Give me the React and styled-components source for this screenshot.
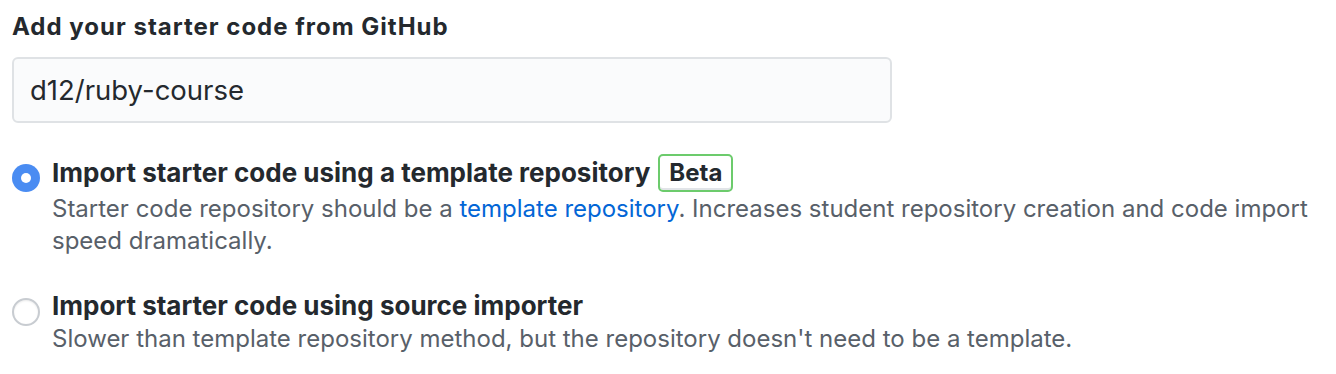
import React from "react";
import styled, { createGlobalStyle } from "styled-components";

const GlobalStyle = createGlobalStyle`
  body {
    margin: 0;
    background: #ffffff;
    font-family: Inter, "Liberation Sans", Arial, sans-serif;
    color: #24292e;
  }
`;

const Page = styled.div`
  padding: 12px 0 0 12px;
  width: 1324px;
`;

const Heading = styled.h3`
  margin: 0;
  font-size: 24px;
  line-height: 30px;
  font-weight: 700;
  letter-spacing: 1px;
  color: #24292e;
`;

const RepoInput = styled.input`
  display: block;
  box-sizing: border-box;
  margin-top: 15px;
  width: 880px;
  height: 66px;
  padding: 0 16px;
  border: 2px solid #dfe2e5;
  border-radius: 6px;
  background: #fafbfc;
  font-family: Inter, "Liberation Sans", Arial, sans-serif;
  font-size: 27.5px;
  color: #24292e;
  outline: none;
`;

const Options = styled.div`
  display: flex;
  flex-direction: column;
  gap: 33px;
  margin-top: 31px;
`;

const Option = styled.label`
  display: grid;
  grid-template-columns: 28px 1fr;
  column-gap: 12px;
`;

const Radio = styled.span`
  box-sizing: border-box;
  width: 28px;
  height: 28px;
  margin-top: ${(p) => p.$top}px;
  border-radius: 50%;
  display: flex;
  align-items: center;
  justify-content: center;
  background: ${(p) => (p.checked ? "#4a8cf2" : "#ffffff")};
  border: ${(p) => (p.checked ? "none" : "2px solid #c8ccd1")};
  box-shadow: ${(p) => (p.checked ? "none" : "inset 0 1px 2px rgba(0,0,0,0.08)")};

  &::after {
    content: "";
    display: ${(p) => (p.checked ? "block" : "none")};
    width: 10px;
    height: 10px;
    border-radius: 50%;
    background: #ffffff;
  }
`;

const Body = styled.div`
  display: flex;
  flex-direction: column;
`;

const Title = styled.div`
  display: flex;
  align-items: center;
  gap: 8px;
  font-size: 26px;
  line-height: 32px;
  font-weight: 700;
  color: #24292e;
`;

const Badge = styled.span`
  box-sizing: border-box;
  height: 38px;
  padding: 0 9px;
  border: 2px solid #6ccb6c;
  border-radius: 5px;
  box-shadow: inset 0 -2px 0 #e1e4e8;
  font-size: 24px;
  line-height: 34px;
  font-weight: 700;
  color: #24292e;
`;

const Note = styled.p`
  margin: 1px 0 0;
  font-size: 24px;
  line-height: 32px;
  color: #586069;
`;

const Link = styled.a`
  color: #0366d6;
  text-decoration: none;
`;

export default function App() {
  return (
    <>
      <GlobalStyle />
      <Page>
        <Heading>Add your starter code from GitHub</Heading>
        <RepoInput defaultValue="d12/ruby-course" />
        <Options>
          <Option>
            <Radio checked $top={10} />
            <Body>
              <Title>
                Import starter code using a template repository
                <Badge>Beta</Badge>
              </Title>
              <Note>
                Starter code repository should be a{" "}
                <Link href="#">template repository</Link>. Increases student
                repository creation and code import speed dramatically.
              </Note>
            </Body>
          </Option>
          <Option>
            <Radio $top={8} />
            <Body>
              <Title>Import starter code using source importer</Title>
              <Note>
                Slower than template repository method, but the repository
                doesn't need to be a template.
              </Note>
            </Body>
          </Option>
        </Options>
      </Page>
    </>
  );
}
